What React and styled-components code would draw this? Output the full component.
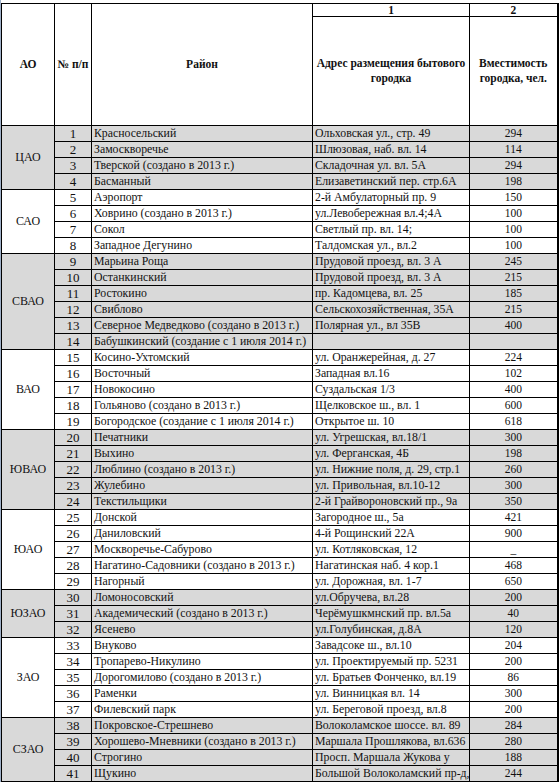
import React from 'react';
import styled, { createGlobalStyle } from 'styled-components';

const groups = [
  {
    ao: 'ЦАО',
    shade: true,
    rows: [
      [1, 'Красносельский', 'Ольховская ул., стр. 49', '294'],
      [2, 'Замоскворечье', 'Шлюзовая, наб. вл. 14', '114'],
      [3, 'Тверской (создано в 2013 г.)', 'Складочная ул. вл. 5А', '294'],
      [4, 'Басманный', 'Елизаветинский пер. стр.6А', '198'],
    ],
  },
  {
    ao: 'САО',
    shade: false,
    rows: [
      [5, 'Аэропорт', '2-й Амбулаторный пр. 9', '150'],
      [6, 'Ховрино (создано в 2013 г.)', 'ул.Левобережная вл.4;4А', '100'],
      [7, 'Сокол', 'Светлый пр. вл. 14;', '100'],
      [8, 'Западное Дегунино', 'Талдомская ул., вл.2', '100'],
    ],
  },
  {
    ao: 'СВАО',
    shade: true,
    rows: [
      [9, 'Марьина Роща', 'Прудовой проезд, вл. 3 А', '245'],
      [10, 'Останкинский', 'Прудовой проезд, вл. 3 А', '215'],
      [11, 'Ростокино', 'пр. Кадомцева, вл. 25', '185'],
      [12, 'Свиблово', 'Сельскохозяйственная, 35А', '215'],
      [13, 'Северное Медведково (создано в 2013 г.)', 'Полярная ул., вл 35В', '400'],
      [14, 'Бабушкинский (создание с 1 июля 2014 г.)', '', ''],
    ],
  },
  {
    ao: 'ВАО',
    shade: false,
    rows: [
      [15, 'Косино-Ухтомский', 'ул. Оранжерейная, д. 27', '224'],
      [16, 'Восточный', 'Западная вл.16', '102'],
      [17, 'Новокосино', 'Суздальская 1/3', '400'],
      [18, 'Гольяново (создано в 2013 г.)', 'Щелковское ш., вл. 1', '600'],
      [19, 'Богородское (создание с 1 июля 2014 г.)', 'Открытое ш. 10', '618'],
    ],
  },
  {
    ao: 'ЮВАО',
    shade: true,
    rows: [
      [20, 'Печатники', 'ул. Угрешская, вл.18/1', '300'],
      [21, 'Выхино', 'ул. Ферганская, 4Б', '198'],
      [22, 'Люблино (создано в 2013 г.)', 'ул. Нижние поля, д. 29, стр.1', '260'],
      [23, 'Жулебино', 'ул. Привольная, вл.10-12', '300'],
      [24, 'Текстильщики', '2-й Грайвороновский пр., 9а', '350'],
    ],
  },
  {
    ao: 'ЮАО',
    shade: false,
    rows: [
      [25, 'Донской', 'Загородное ш., 5а', '421'],
      [26, 'Даниловский', '4-й Рощинский 22А', '900'],
      [27, 'Москворечье-Сабурово', 'ул. Котляковская, 12', '_'],
      [28, 'Нагатино-Садовники (создано в 2013 г.)', 'Нагатинская наб. 4 кор.1', '468'],
      [29, 'Нагорный', 'ул. Дорожная, вл. 1-7', '650'],
    ],
  },
  {
    ao: 'ЮЗАО',
    shade: true,
    rows: [
      [30, 'Ломоносовский', 'ул.Обручева, вл.28', '200'],
      [31, 'Академический (создано в 2013 г.)', 'Черёмушкмнский пр. вл.5а', '40'],
      [32, 'Ясенево', 'ул.Голубинская, д.8А', '120'],
    ],
  },
  {
    ao: 'ЗАО',
    shade: false,
    rows: [
      [33, 'Внуково', 'Завадсоке ш., вл.10', '204'],
      [34, 'Тропарево-Никулино', 'ул. Проектируемый пр. 5231', '200'],
      [35, 'Дорогомилово (создано в 2013 г.)', 'ул. Братьев Фонченко, вл.19', '86'],
      [36, 'Раменки', 'ул. Винницкая вл. 14', '300'],
      [37, 'Филевский парк', 'ул. Береговой проезд, вл.8', '200'],
    ],
  },
  {
    ao: 'СЗАО',
    shade: true,
    rows: [
      [38, 'Покровское-Стрешнево', 'Волоколамское шоссе. вл. 89', '284'],
      [39, 'Хорошево-Мневники (создано в 2013 г.)', 'Маршала Прошлякова, вл.636', '280'],
      [40, 'Строгино', 'Просп. Маршала Жукова у', '188'],
      [41, 'Щукино', 'Большой Волоколамский пр-д,', '244'],
    ],
  },
];

// column widths, px
const columns = [53, 37, 221, 157, 88];

function App() {
  return (
    <>
      <GlobalStyle />
      <Page>
        <Sheet>
          <colgroup>
            {columns.map((w, i) => (
              <Col key={i} $w={w} />
            ))}
          </colgroup>
          <thead>
            <IndexRow>
              <HeadCell rowSpan={2}>АО</HeadCell>
              <HeadCell rowSpan={2}>№ п/п</HeadCell>
              <HeadCell rowSpan={2}>Район</HeadCell>
              <IndexCell>1</IndexCell>
              <IndexCell>2</IndexCell>
            </IndexRow>
            <TitleRow>
              <HeadCell>
                Адрес размещения бытового
                <br />
                городка
              </HeadCell>
              <HeadCell>
                Вместимость
                <br />
                городка, чел.
              </HeadCell>
            </TitleRow>
          </thead>
          <tbody>
            {groups.map(group =>
              group.rows.map(([num, district, address, size], i) => (
                <Row key={num} $shade={group.shade}>
                  {i === 0 && (
                    <AoCell rowSpan={group.rows.length} $shade={group.shade}>
                      {group.ao}
                    </AoCell>
                  )}
                  <NumCell>{num}</NumCell>
                  <TextCell>{district}</TextCell>
                  <TextCell>{address}</TextCell>
                  <CapCell>{size}</CapCell>
                </Row>
              ))
            )}
          </tbody>
        </Sheet>
      </Page>
    </>
  );
}

export default App;

const serif = `'Liberation Serif', 'Times New Roman', serif`;

const GlobalStyle = createGlobalStyle`
  html, body {
    margin: 0;
    padding: 0;
    background: #fff;
    font-family: ${serif};
  }
`;

const Page = styled.div`
  width: 559px;
  height: 782px;
  overflow: hidden;
  padding-top: 3px;
  box-sizing: border-box;
  border-left: 1px solid #9fb0c8;
  font-family: ${serif};
  color: #111;
`;

const Sheet = styled.table`
  border-collapse: collapse;
  table-layout: fixed;
  width: 557px;
  border-right: 2px solid #000;
  font-family: ${serif};
`;

const Col = styled.col`
  width: ${({ $w }) => $w}px;
`;

const IndexRow = styled.tr`
  height: 13px;
`;

const TitleRow = styled.tr`
  height: 109px;
`;

const HeadCell = styled.th`
  border: 1px solid #000;
  padding: 0 2px;
  font-family: ${serif};
  font-size: 11.5px;
  font-weight: bold;
  line-height: 15px;
  text-align: center;
  vertical-align: middle;
  white-space: nowrap;
`;

const IndexCell = styled(HeadCell)`
  line-height: 11px;
`;

const Row = styled.tr`
  height: 16px;
  background: ${({ $shade }) => ($shade ? '#d9d9d9' : '#fff')};
`;

const Cell = styled.td`
  border: 1px solid #000;
  padding: 0;
  height: 15px;
  line-height: 15px;
  font-family: ${serif};
  font-size: 11.8px;
  white-space: nowrap;
  overflow: visible;
  vertical-align: bottom;
`;

const AoCell = styled(Cell)`
  text-align: center;
  vertical-align: middle;
  font-size: 12px;
  background: ${({ $shade }) => ($shade ? '#d9d9d9' : '#fff')};
`;

const NumCell = styled(Cell)`
  text-align: center;
  font-size: 13px;
`;

const TextCell = styled(Cell)`
  padding-left: 2px;
`;

const CapCell = styled(Cell)`
  text-align: center;
  font-size: 11.5px;
`;
